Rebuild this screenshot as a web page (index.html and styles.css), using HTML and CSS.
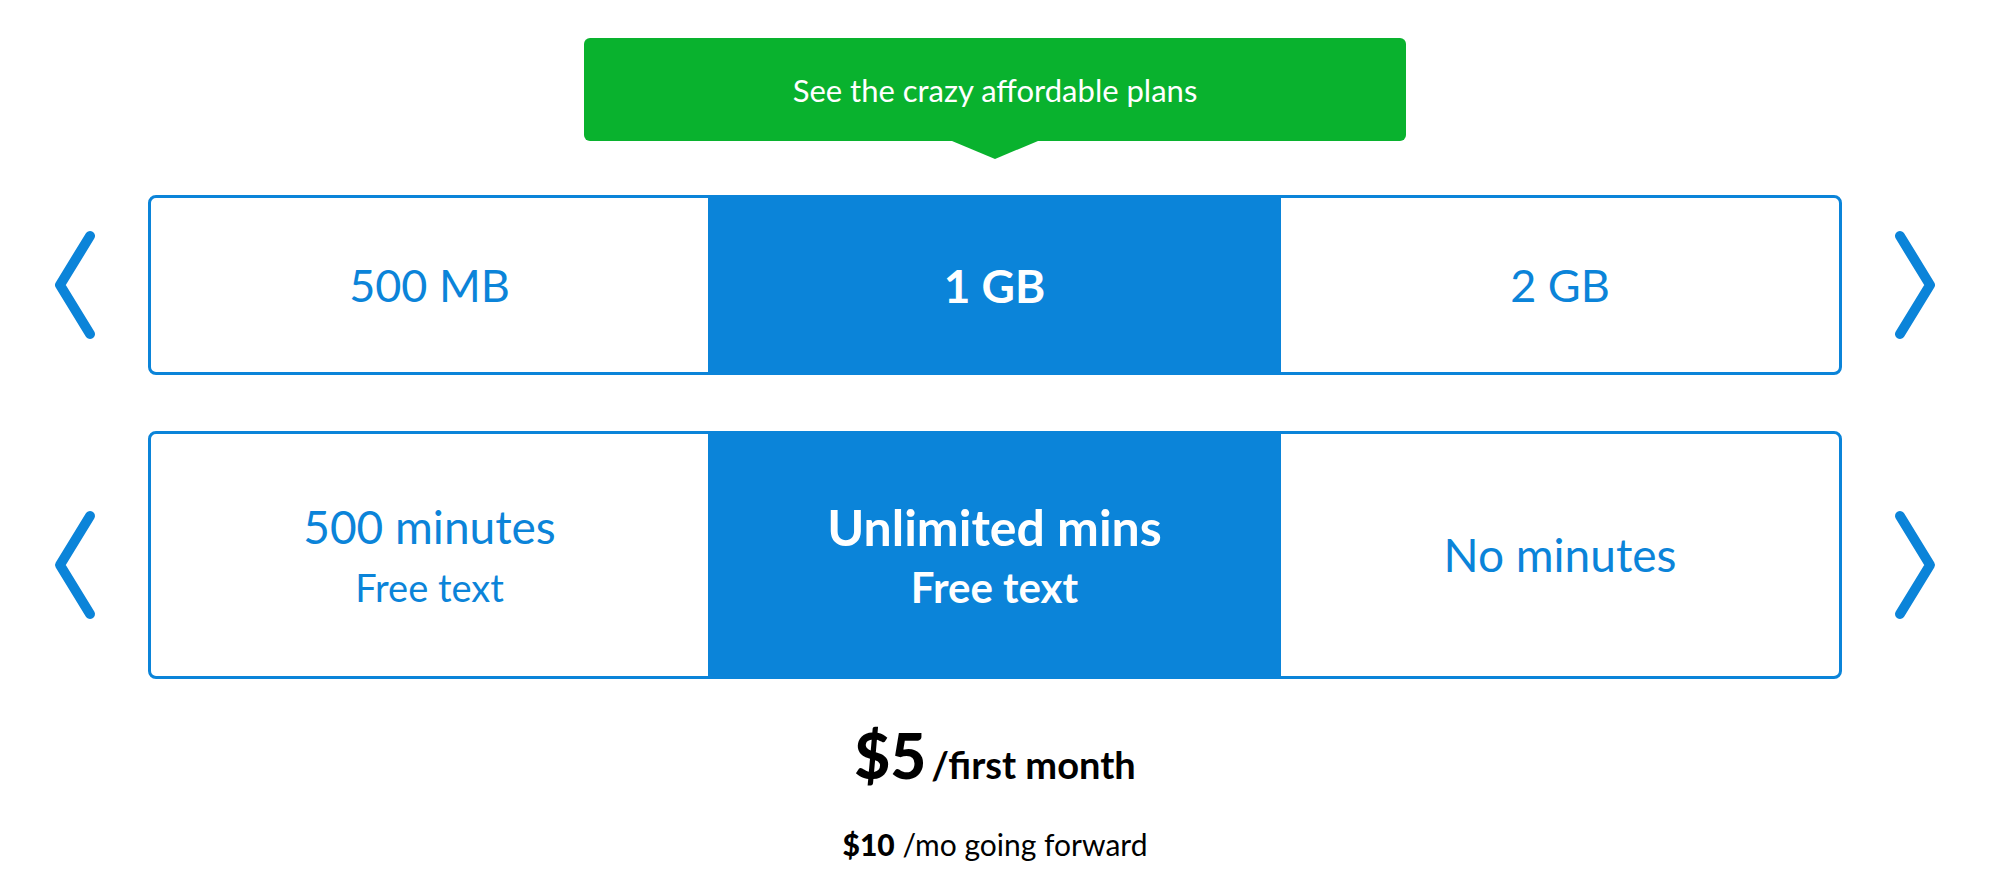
FILE: index.html
```html
<!DOCTYPE html>
<html lang="en">
<head>
<meta charset="utf-8">
<title>Plans</title>
<link rel="stylesheet" href="styles.css">
</head>
<body>
<div class="page">
  <div class="banner">See the crazy affordable plans</div>

  <div class="row row-data">
    <button class="chev" aria-label="Previous">
      <svg width="44" height="112" viewBox="0 0 44 112"><path d="M37 7 L7 56 L37 105" fill="none" stroke="#0b84d9" stroke-width="10" stroke-linecap="round" stroke-linejoin="round"/></svg>
    </button>
    <div class="options">
      <div class="opt">500 MB</div>
      <div class="opt active">1 GB</div>
      <div class="opt">2 GB</div>
    </div>
    <button class="chev" aria-label="Next">
      <svg width="44" height="112" viewBox="0 0 44 112"><path d="M7 7 L37 56 L7 105" fill="none" stroke="#0b84d9" stroke-width="10" stroke-linecap="round" stroke-linejoin="round"/></svg>
    </button>
  </div>

  <div class="row row-mins">
    <button class="chev" aria-label="Previous">
      <svg width="44" height="112" viewBox="0 0 44 112"><path d="M37 7 L7 56 L37 105" fill="none" stroke="#0b84d9" stroke-width="10" stroke-linecap="round" stroke-linejoin="round"/></svg>
    </button>
    <div class="options tall">
      <div class="opt"><span class="main">500 minutes</span><span class="sub">Free text</span></div>
      <div class="opt active"><span class="main">Unlimited mins</span><span class="sub">Free text</span></div>
      <div class="opt"><span class="main">No minutes</span></div>
    </div>
    <button class="chev" aria-label="Next">
      <svg width="44" height="112" viewBox="0 0 44 112"><path d="M7 7 L37 56 L7 105" fill="none" stroke="#0b84d9" stroke-width="10" stroke-linecap="round" stroke-linejoin="round"/></svg>
    </button>
  </div>

  <div class="price"><span class="big">$5</span><span class="per">/first month</span></div>
  <div class="after"><b>$10</b> /mo going forward</div>
</div>
</body>
</html>
```

FILE: styles.css
```css
html, body {
  margin: 0;
  padding: 0;
  background: #ffffff;
}

body {
  font-family: "Lato", "Open Sans", sans-serif;
  color: #0b84d9;
}

.page {
  width: 1990px;
  display: flex;
  flex-direction: column;
  align-items: center;
}

.banner {
  position: relative;
  margin-top: 38px;
  width: 822px;
  height: 103px;
  background: #09b22e;
  border-radius: 6px;
  color: #ffffff;
  font-size: 31px;
  display: flex;
  align-items: center;
  justify-content: center;
  box-sizing: border-box;
}

.banner::after {
  content: "";
  position: absolute;
  left: 50%;
  top: 100%;
  margin-left: -43px;
  border-left: 43px solid transparent;
  border-right: 43px solid transparent;
  border-top: 18px solid #09b22e;
}

.row {
  display: flex;
  align-items: center;
  gap: 51px;
}

.row-data {
  margin-top: 54px;
}

.row-mins {
  margin-top: 56px;
}

.row-mins .chev {
  margin-top: 20px;
}

.chev {
  border: 0;
  background: none;
  padding: 0;
  width: 44px;
  height: 112px;
  display: flex;
  cursor: pointer;
}

.options {
  width: 1694px;
  height: 180px;
  box-sizing: border-box;
  border: 3px solid #0b84d9;
  border-radius: 8px;
  display: grid;
  grid-template-columns: 557px 573px 1fr;
  overflow: hidden;
}

.options.tall {
  height: 248px;
}

.opt {
  display: flex;
  flex-direction: column;
  align-items: center;
  justify-content: center;
  font-size: 45px;
  color: #0b84d9;
  gap: 6px;
}

.opt.active {
  background: #0b84d9;
  color: #ffffff;
  font-weight: 700;
}

.opt .main {
  font-size: 46px;
  line-height: 58px;
}

.opt .sub {
  font-size: 38px;
  line-height: 50px;
}

.opt.active .main {
  font-size: 50px;
}

.opt.active .sub {
  font-size: 42px;
}

.row-data .opt.active {
  font-size: 46px;
}

.price {
  margin-top: 36px;
  display: flex;
  align-items: baseline;
  gap: 5px;
  color: #000000;
  font-weight: 700;
}

.price .big {
  font-size: 62px;
  line-height: 80px;
  font-weight: 900;
}

.price .per {
  font-size: 38px;
  font-weight: 700;
}

.after {
  margin-top: 31px;
  color: #000000;
  font-size: 30px;
}

.after b {
  font-weight: 900;
}
```
